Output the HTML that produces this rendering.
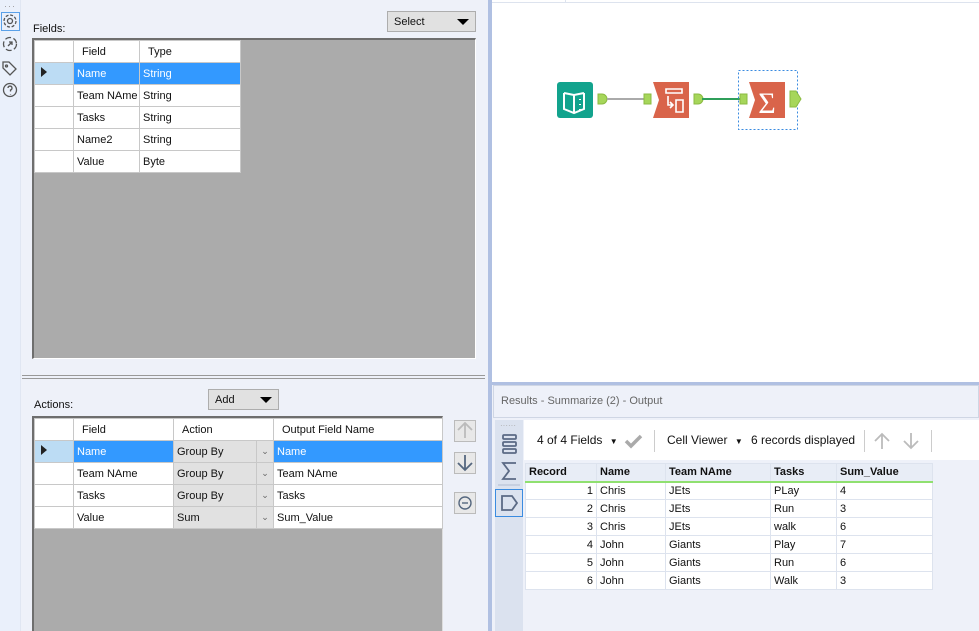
<!DOCTYPE html>
<html><head><meta charset="utf-8"><style>
*{box-sizing:border-box;margin:0;padding:0}
html,body{width:979px;height:631px;overflow:hidden}
body{background:#eef1f9;font-family:"Liberation Sans",sans-serif;font-size:11px;color:#111;position:relative}
.a{position:absolute}
table{border-collapse:collapse;table-layout:fixed;position:absolute}
td{border:1px solid #c8c8c8;background:#fff;height:22px;padding:0 3px;white-space:nowrap;overflow:hidden}
td.h{padding-left:8px}
td.sel{background:#3399ff;color:#fff}
td.rh{background:#fff}
td.rhs{background:#bcdcf4}
td.dd{background:#e1e1e1;position:relative}
.tri{width:0;height:0;border-top:5px solid transparent;border-bottom:5px solid transparent;border-left:6px solid #222;display:inline-block;margin-left:3px}
.btn{background:#e1e1e1;border:1px solid #adadad}
.res td{height:18px;border:1px solid #dde3ee;padding:0 3px}
.res tr.hd td{background:#e8edf6;font-weight:bold;border-bottom:2px solid #90e070}
.arr{position:absolute;right:0;top:0;width:17px;height:21px;border-left:1px solid #c8c8c8;text-align:center;color:#666;font-size:9px;line-height:21px}
</style></head><body>
<div class="a" style="left:0;top:0;width:21px;height:631px;background:#eaf0fb;border-right:1px solid #e0e6f2"></div>
<div class="a" style="left:4px;top:1px;color:#999;font-size:9px;letter-spacing:1px">···</div>
<div class="a" style="left:1px;top:12px;width:19px;height:19px;border:1px solid #5aa0e8"></div>
<svg class="a" style="left:0;top:10px" width="21" height="92" viewBox="0 0 21 92" fill="none" stroke="#555" stroke-width="1.3">
<circle cx="10" cy="11" r="2.5"/><circle cx="10" cy="11" r="6" stroke-dasharray="3 1.7"/>
<circle cx="10" cy="34" r="6.5" stroke-dasharray="6 2.5"/><path d="M8 36l4-4M9 32h3v3"/>
<path d="M3 53v5l7 7 6-6-7-7h-6z"/><circle cx="6.5" cy="56" r="1"/>
<circle cx="10" cy="80" r="6.5"/><path d="M8 78a2 2 0 1 1 2.5 2v1.5M10.5 84v.5"/>
</svg>
<div class="a" style="left:33px;top:23px">Fields:</div>
<div class="a btn" style="left:387px;top:11px;width:89px;height:21px;padding:4px 0 0 6px">Select<span style="position:absolute;right:6px;top:7px;border-left:6px solid transparent;border-right:6px solid transparent;border-top:6px solid #000"></span></div>
<div class="a" style="left:32px;top:38px;width:444px;height:321px;background:#ababab;border-top:2px solid #6e6e6e;border-left:2px solid #6e6e6e;border-right:1px solid #fff;border-bottom:1px solid #fff"></div>
<table style="left:34px;top:40px;width:206px">
<col style="width:39px"><col style="width:66px"><col style="width:101px">
<tr><td class="rh"></td><td class="h">Field</td><td class="h">Type</td></tr>
<tr><td class="rhs"><span class="tri"></span></td><td class="sel">Name</td><td class="sel">String</td></tr>
<tr><td></td><td>Team NAme</td><td>String</td></tr>
<tr><td></td><td>Tasks</td><td>String</td></tr>
<tr><td></td><td>Name2</td><td>String</td></tr>
<tr><td></td><td>Value</td><td>Byte</td></tr>
</table>
<div class="a" style="left:22px;top:375px;width:463px;height:4px;border-top:1px solid #999;border-bottom:1px solid #999"></div>
<div class="a" style="left:34px;top:399px">Actions:</div>
<div class="a btn" style="left:208px;top:389px;width:71px;height:21px;padding:4px 0 0 6px">Add<span style="position:absolute;right:6px;top:7px;border-left:6px solid transparent;border-right:6px solid transparent;border-top:6px solid #000"></span></div>
<div class="a" style="left:32px;top:416px;width:411px;height:220px;background:#ababab;border-top:2px solid #6e6e6e;border-left:2px solid #6e6e6e;border-right:1px solid #ddd"></div>
<table style="left:34px;top:418px;width:408px">
<col style="width:39px"><col style="width:100px"><col style="width:100px"><col style="width:169px">
<tr><td class="rh"></td><td class="h">Field</td><td class="h">Action</td><td class="h">Output Field Name</td></tr>
<tr><td class="rhs"><span class="tri"></span></td><td class="sel">Name</td><td class="dd">Group By<span class="arr">&#8964;</span></td><td class="sel">Name</td></tr>
<tr><td></td><td>Team NAme</td><td class="dd">Group By<span class="arr">&#8964;</span></td><td>Team NAme</td></tr>
<tr><td></td><td>Tasks</td><td class="dd">Group By<span class="arr">&#8964;</span></td><td>Tasks</td></tr>
<tr><td></td><td>Value</td><td class="dd">Sum<span class="arr">&#8964;</span></td><td>Sum_Value</td></tr>
</table>
<svg class="a" style="left:454px;top:420px" width="22" height="96" fill="none" stroke-width="1.8">
<rect x=".5" y=".5" width="21" height="21" fill="#e8e8e8" stroke="#bbb" stroke-width="1"/><path d="M11 18V4M4 10l7-7 7 7" stroke="#bbb"/>
<rect x=".5" y="32.5" width="21" height="21" fill="#e8e8e8" stroke="#bbb" stroke-width="1"/><path d="M11 35v14M4 43l7 7 7-7" stroke="#55677f"/>
<rect x=".5" y="72.5" width="21" height="21" fill="#e8e8e8" stroke="#bbb" stroke-width="1"/><circle cx="11" cy="83" r="6" stroke="#55677f" stroke-width="1.4"/><path d="M8 83h6" stroke="#55677f" stroke-width="1.4"/>
</svg>
<div class="a" style="left:488px;top:0;width:4px;height:631px;background:#b0c0e2"></div>
<div class="a" style="left:492px;top:0;width:487px;height:382px;background:#fff"></div>
<div class="a" style="left:492px;top:0;width:487px;height:3px;border-bottom:1px solid #dde3ee"></div>
<div class="a" style="left:565px;top:0;width:1px;height:3px;background:#dde3ee"></div>
<div class="a" style="left:492px;top:382px;width:487px;height:3px;background:#b0c0e2"></div>
<svg class="a" style="left:550px;top:65px" width="260" height="70">
<rect x="7" y="17" width="36" height="36" rx="3" fill="#12a38d"/>
<path d="M14 28v16l10 4 10-4V28M24 30v18M14 28l10 2 10-2" stroke="#fff" stroke-width="2" fill="none"/>
<path d="M30 34v1M30 39v1M30 44v1" stroke="#fff" stroke-width="2"/>
<path d="M48 29h4a5 5 0 0 1 0 10h-4z" fill="#a6d65a" stroke="#8bbb42"/>
<line x1="57" y1="34" x2="94" y2="34" stroke="#aaa" stroke-width="2"/>
<rect x="94" y="29" width="7" height="10" fill="#a6d65a" stroke="#8bbb42"/>
<path d="M103 17h36v36h-36l6-18z" fill="#d9644a"/>
<path d="M116 24h16v4h-16zM118 31v9h5M120 37l3 3-3 3M126 35h7v12h-7z" stroke="#fff" stroke-width="1.6" fill="none"/>
<path d="M144 29h4a5 5 0 0 1 0 10h-4z" fill="#a6d65a" stroke="#8bbb42"/>
<line x1="152" y1="34" x2="190" y2="34" stroke="#2f9f5a" stroke-width="2"/>
<rect x="190" y="29" width="7" height="10" fill="#a6d65a" stroke="#8bbb42"/>
<rect x="188.5" y="5.5" width="59" height="59" fill="none" stroke="#3a8be0" stroke-dasharray="2 2"/>
<path d="M199 17h36v36h-36l6-18z" fill="#d9644a"/>
<text x="217" y="48" fill="#fff" font-size="30" font-family="Liberation Serif" text-anchor="middle">Σ</text>
<path d="M240 26h6l5 8-5 8h-6z" fill="#a6d65a" stroke="#8bbb42"/>
</svg>
<div class="a" style="left:493px;top:385px;width:486px;height:33px;background:#eef1f9;border:1px solid #cfd6e4;color:#666;padding:9px 0 0 7px">Results - Summarize (2) - Output</div>
<div class="a" style="left:495px;top:420px;width:28px;height:211px;background:#dbe2ef"></div>
<div class="a" style="left:500px;top:421px;color:#aaa;font-size:8px">······</div>
<svg class="a" style="left:495px;top:430px" width="28" height="90" fill="none" stroke="#5b6a85" stroke-width="1.8">
<rect x="8" y="5" width="13" height="4" rx="1"/><rect x="8" y="12" width="13" height="4" rx="1"/><rect x="8" y="19" width="13" height="4" rx="1"/>
<path d="M21 33H8l6 8-6 8h13"/>
<line x1="3" y1="55" x2="25" y2="55" stroke="#b0bcd2" stroke-width="1"/>
<rect x=".5" y="59.5" width="27" height="27" stroke="#3a8be0" stroke-width="1"/>
<path d="M7 66h10l5 7-5 7H7z"/>
</svg>
<div class="a" style="left:524px;top:420px;width:455px;height:41px;background:#fff;border-bottom:1px solid #eef1f9"></div>
<div class="a" style="left:537px;top:433px;font-size:12px">4 of 4 Fields <span style="font-size:8px;margin-left:4px">▼</span></div>
<svg class="a" style="left:624px;top:433px" width="20" height="16"><path d="M2 8l5 5L17 3" stroke="#aaa" stroke-width="3.5" fill="none"/></svg>
<div class="a" style="left:654px;top:430px;width:1px;height:22px;background:#ccc"></div>
<div class="a" style="left:667px;top:433px;font-size:12px">Cell Viewer <span style="font-size:8px;margin-left:4px">▼</span></div>
<div class="a" style="left:751px;top:433px;font-size:12px">6 records displayed</div>
<div class="a" style="left:864px;top:430px;width:1px;height:22px;background:#ccc"></div>
<svg class="a" style="left:872px;top:431px" width="50" height="20" stroke="#bbb" stroke-width="1.8" fill="none"><path d="M10 18V3M3 10l7-7 7 7M39 2v15M32 10l7 7 7-7"/></svg>
<div class="a" style="left:931px;top:430px;width:1px;height:22px;background:#ccc"></div>
<table class="res" style="left:525px;top:463px;width:407px">
<col style="width:71px"><col style="width:69px"><col style="width:105px"><col style="width:66px"><col style="width:96px">
<tr class="hd"><td>Record</td><td>Name</td><td>Team NAme</td><td>Tasks</td><td>Sum_Value</td></tr>
<tr><td style="text-align:right">1</td><td>Chris</td><td>JEts</td><td>PLay</td><td>4</td></tr>
<tr><td style="text-align:right">2</td><td>Chris</td><td>JEts</td><td>Run</td><td>3</td></tr>
<tr><td style="text-align:right">3</td><td>Chris</td><td>JEts</td><td>walk</td><td>6</td></tr>
<tr><td style="text-align:right">4</td><td>John</td><td>Giants</td><td>Play</td><td>7</td></tr>
<tr><td style="text-align:right">5</td><td>John</td><td>Giants</td><td>Run</td><td>6</td></tr>
<tr><td style="text-align:right">6</td><td>John</td><td>Giants</td><td>Walk</td><td>3</td></tr>
</table>
</body></html>
